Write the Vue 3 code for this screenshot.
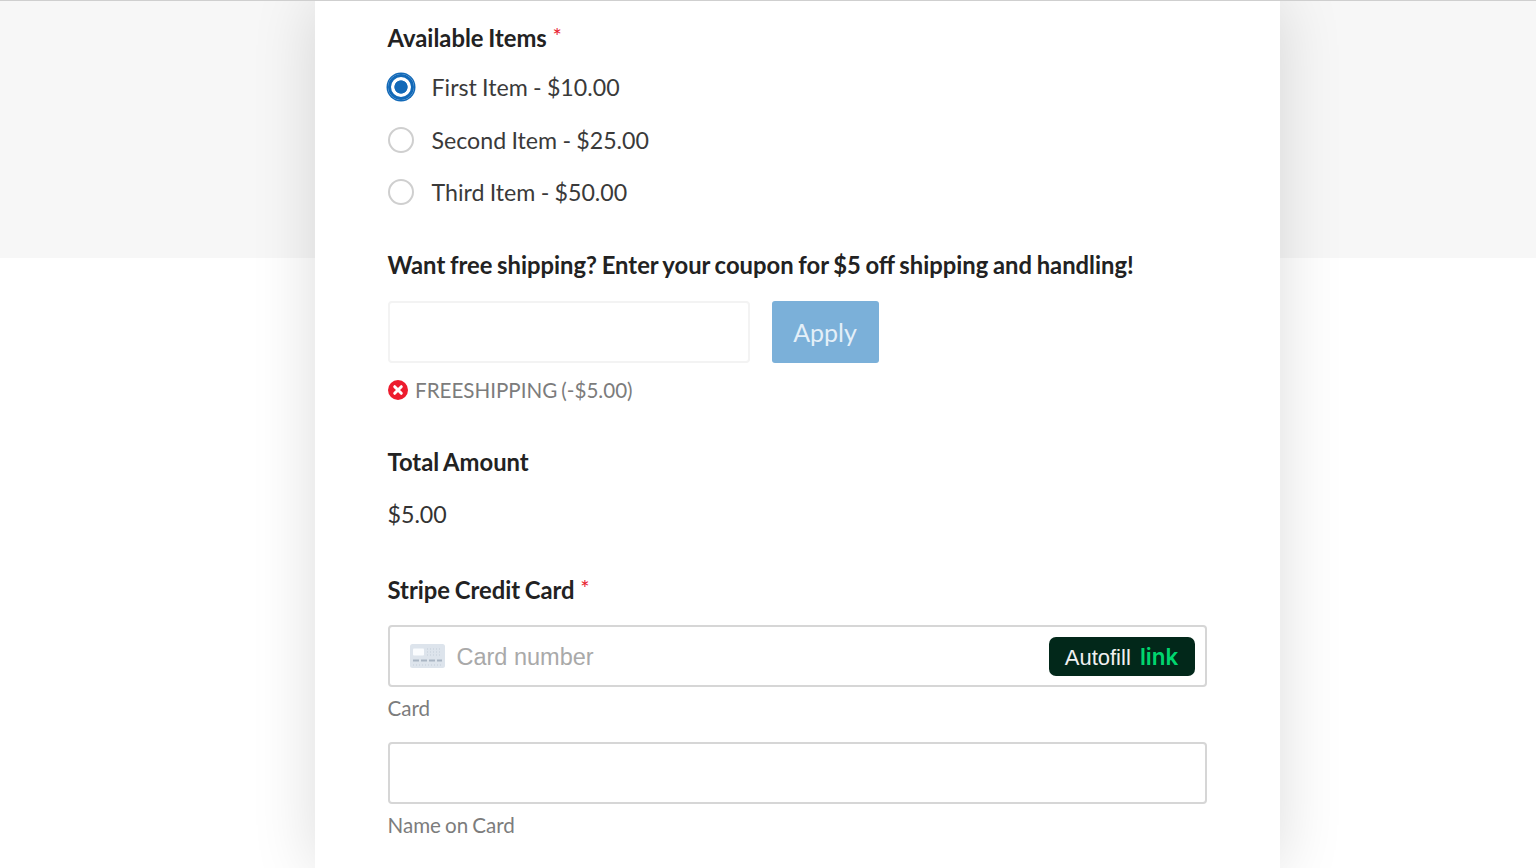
<script setup>
const items = [
  { label: 'First Item - $10.00', selected: true },
  { label: 'Second Item - $25.00', selected: false },
  { label: 'Third Item - $50.00', selected: false },
]
</script>

<template>
  <div class="page">
    <main class="card">
      <div class="title first">Available Items <span class="req">*</span></div>

      <div class="radios">
        <div v-for="item in items" :key="item.label" class="radio-row">
          <span class="radio" :class="{ on: item.selected }"></span>
          <span>{{ item.label }}</span>
        </div>
      </div>

      <div class="title coupon-title">Want free shipping? Enter your coupon for $5 off shipping and handling!</div>

      <div class="coupon-row">
        <div class="coupon-input"></div>
        <div class="apply">Apply</div>
      </div>

      <div class="applied">
        <svg class="x-icon" viewBox="0 0 20 20" width="20" height="20">
          <circle cx="10" cy="10" r="10" fill="#ed1c2e" />
          <path d="M6.7 6.7 13.3 13.3M13.3 6.7 6.7 13.3" stroke="#fff" stroke-width="3" stroke-linecap="round" />
        </svg>
        <span>FREESHIPPING (-$5.00)</span>
      </div>

      <div class="title total-title">Total Amount</div>
      <div class="amount">$5.00</div>

      <div class="title stripe-title">Stripe Credit Card <span class="req">*</span></div>

      <div class="field card-field">
        <svg class="card-icon" viewBox="0 0 35 24" width="35" height="24">
          <rect width="35" height="24" rx="2.5" fill="#dde4ec" />
          <rect x="3" y="4.5" width="11" height="7" rx="1" fill="#fafcfe" />
          <path d="M3 16.5h6M11 16.5h6M19 16.5h6M27 16.5h5" stroke="#a9b5c3" stroke-width="2" />
          <path d="M17 5h15M17 8h15M17 11h15M3 21h29" stroke="#c3cdd8" stroke-width="1" stroke-dasharray="1 2" />
        </svg>
        <span class="placeholder">Card number</span>
        <div class="autofill">Autofill <b>link</b></div>
      </div>
      <div class="hint card-hint">Card</div>

      <div class="field name-field"></div>
      <div class="hint name-hint">Name on Card</div>
    </main>
  </div>
</template>

<style>
html, body { margin: 0; background: #fff; }
</style>

<style scoped>
.page {
  height: 868px;
  overflow: hidden;
  background: linear-gradient(#f7f7f7 257px, #fff 257px);
  border-top: 1px solid #cfcfcf;
  box-sizing: border-box;
  font-family: Lato, "Open Sans", sans-serif;
  color: #333;
}
.card {
  width: 965px;
  height: 868px;
  margin-left: 314.5px;
  padding: 24px 73px 0;
  box-sizing: border-box;
  background: #fff;
  box-shadow: 0 0 60px rgba(0, 0, 0, 0.14);
}
.title {
  height: 26px;
  line-height: 26px;
  font-size: 23.8px;
  word-spacing: -1.1px;
  font-weight: 700;
  color: #222;
  white-space: nowrap;
}
.req {
  color: #e8202e;
  font-size: 22px;
  line-height: 0;
  font-weight: 400;
  vertical-align: 3px;
  margin-left: 1px;
}
.radios {
  margin-top: 21px;
  display: flex;
  flex-direction: column;
  gap: 22.5px;
}
.radio-row {
  height: 30px;
  display: flex;
  align-items: center;
  gap: 18px;
  font-size: 23.2px;
  word-spacing: -0.7px;
  color: #3a3a3a;
}
.radio {
  width: 26px;
  height: 26px;
  box-sizing: border-box;
  border: 2px solid #cfcfcf;
  border-radius: 50%;
  background: #fff;
}
.radio.on {
  border: 3px solid #1269b8;
  box-shadow: 0 0 0 1.5px #1269b8;
  background: radial-gradient(circle, #1269b8 0 6.3px, #fff 7px);
}
.coupon-title { margin-top: 45px; }
.coupon-row {
  margin-top: 23px;
  display: flex;
  gap: 22px;
}
.coupon-input {
  width: 362px;
  height: 62px;
  box-sizing: border-box;
  border: 2px solid #f3f3f3;
  border-radius: 4px;
}
.apply {
  width: 107px;
  height: 62px;
  line-height: 62px;
  text-align: center;
  font-size: 25px;
  color: #e4eff8;
  background: #7bb0d9;
  border-radius: 3px;
}
.applied {
  margin-top: 15px;
  height: 24px;
  display: flex;
  align-items: center;
  gap: 7.5px;
  font-size: 20.6px;
  word-spacing: -1.2px;
  color: #7c7c7c;
}
.x-icon { flex: none; }
.total-title { margin-top: 47px; }
.amount {
  margin-top: 25px;
  height: 28px;
  line-height: 28px;
  font-size: 23.2px;
  color: #333;
}
.stripe-title { margin-top: 49px; }
.field {
  width: 819px;
  height: 62px;
  box-sizing: border-box;
  border: 2px solid #d6d6d6;
  border-radius: 4px;
  background: #fff;
}
.card-field {
  margin-top: 22px;
  display: flex;
  align-items: center;
  padding: 0 10px 0 20px;
}
.card-icon { flex: none; }
.placeholder {
  margin-left: 12px;
  padding-top: 2px;
  flex: 1;
  font-family: "Liberation Sans", Arial, sans-serif;
  font-size: 23.5px;
  color: #a9a9a9;
}
.autofill {
  width: 146px;
  height: 39px;
  line-height: 39px;
  text-align: center;
  border-radius: 7px;
  background: #02281a;
  color: #f0f0f0;
  font-family: "Liberation Sans", Arial, sans-serif;
  font-size: 22px;
  white-space: nowrap;
}
.autofill b {
  margin-left: 3px;
  font-family: Inter, "Liberation Sans", sans-serif;
  font-size: 22.5px;
  font-weight: 600;
  color: #00d66f;
}
.hint {
  height: 22px;
  line-height: 22px;
  font-size: 20.6px;
  word-spacing: -1.2px;
  color: #7c7c7c;
}
.card-hint { margin-top: 10px; }
.name-field { margin-top: 23px; }
.name-hint { margin-top: 10px; }
</style>
